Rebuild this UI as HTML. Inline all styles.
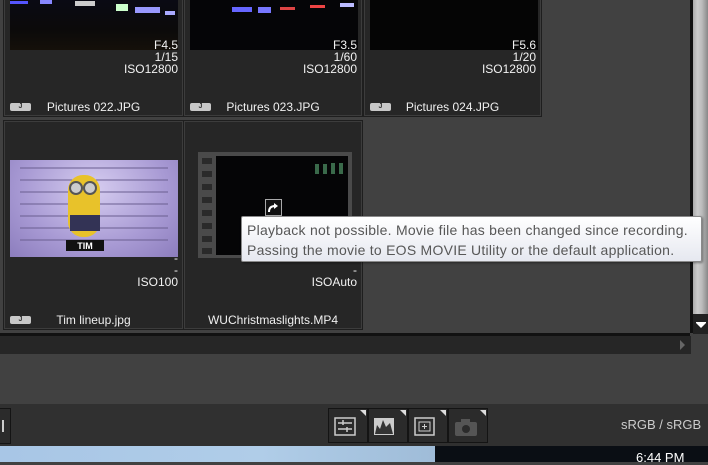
<!DOCTYPE html>
<html><head><meta charset="utf-8"><style>
*{margin:0;padding:0;box-sizing:border-box}
body{width:708px;height:462px;overflow:hidden;background:#414141;position:relative;font-family:"Liberation Sans",sans-serif;color:#f0f0f0}
.abs{position:absolute}
.cell{position:absolute;background:#262626;border:1px solid #3c3c3c;outline:1px solid #1e1e1e}
.meta{position:absolute;right:4px;text-align:right;font-size:12px;line-height:12px;color:#f2f2f2}
.name{position:absolute;font-size:12px;color:#f0f0f0;left:0;right:0;text-align:center}
.j{position:absolute;left:5px;width:21px;height:8px;background:#c8c8c8;border-radius:2px;font-size:7px;line-height:8px;color:#333;text-align:center;font-weight:bold}
.btn{position:absolute;top:408px;width:40px;height:35px;background:#2b2b2b;border:1px solid #141414}
.btn:after{content:"";position:absolute;right:1px;top:1px;border-top:6px solid #ddd;border-left:6px solid transparent}
</style></head><body>
<!-- row1 -->
<div class="cell" style="left:4px;top:-2px;width:179px;height:118px">
 <div class="abs" style="left:5px;top:0;width:168px;height:51px;background:linear-gradient(#0a0a14,#0b0a0a 60%,#15100a)"></div>
 <svg class="abs" style="left:5px;top:0" width="168" height="20"><rect x="0" y="2" width="18" height="3" fill="#55f"/><rect x="30" y="1" width="12" height="4" fill="#88f"/><rect x="65" y="2" width="20" height="5" fill="#ccc"/><rect x="106" y="5" width="12" height="7" fill="#cfc"/><rect x="125" y="8" width="25" height="6" fill="#99f"/><rect x="155" y="12" width="10" height="4" fill="#aaf"/></svg>
 <div class="meta" style="top:40px">F4.5<br>1/15<br>ISO12800</div>
 <div class="j" style="top:104px">J</div><div class="name" style="top:101px">Pictures 022.JPG</div>
</div>
<div class="cell" style="left:184px;top:-2px;width:178px;height:118px">
 <div class="abs" style="left:5px;top:0;width:168px;height:51px;background:#050507"></div>
 <svg class="abs" style="left:5px;top:0" width="168" height="20"><rect x="42" y="8" width="20" height="5" fill="#66f"/><rect x="68" y="8" width="13" height="6" fill="#77f"/><rect x="90" y="8" width="15" height="3" fill="#d44"/><rect x="120" y="6" width="15" height="3" fill="#e44"/><rect x="150" y="4" width="14" height="4" fill="#bbf"/></svg>
 <div class="meta" style="top:40px">F3.5<br>1/60<br>ISO12800</div>
 <div class="j" style="top:104px">J</div><div class="name" style="top:101px">Pictures 023.JPG</div>
</div>
<div class="cell" style="left:364px;top:-2px;width:177px;height:118px">
 <div class="abs" style="left:5px;top:0;width:168px;height:51px;background:#050505"></div>
 <div class="meta" style="top:40px">F5.6<br>1/20<br>ISO12800</div>
 <div class="j" style="top:104px">J</div><div class="name" style="top:101px">Pictures 024.JPG</div>
</div>
<!-- row2 -->
<div class="cell" style="left:4px;top:121px;width:179px;height:208px">
 <div class="abs" style="left:5px;top:38px;width:168px;height:97px;background:radial-gradient(ellipse at 50% 30%,#d6cdf0,#a89ad4 60%,#8c7dbd)"></div>
 <svg class="abs" style="left:5px;top:38px" width="168" height="97"><g stroke="#6a5e90" stroke-width="1"><line x1="10" y1="8" x2="158" y2="8"/><line x1="10" y1="20" x2="158" y2="20"/><line x1="10" y1="32" x2="158" y2="32"/><line x1="10" y1="44" x2="158" y2="44"/><line x1="10" y1="56" x2="158" y2="56"/><line x1="10" y1="68" x2="158" y2="68"/><line x1="10" y1="80" x2="158" y2="80"/></g><rect x="58" y="15" width="32" height="62" rx="15" fill="#e8c22a"/><circle cx="66" cy="28" r="6" fill="#ccc" stroke="#555" stroke-width="2"/><circle cx="80" cy="28" r="6" fill="#ccc" stroke="#555" stroke-width="2"/><rect x="60" y="55" width="30" height="16" fill="#335"/><rect x="56" y="80" width="38" height="11" fill="#111"/><text x="75" y="89" font-size="9" fill="#fff" text-anchor="middle" font-weight="bold" font-family="Liberation Sans">TIM</text></svg>
 <div class="meta" style="top:130px">-<br>-<br>ISO100</div>
 <div class="j" style="top:194px">J</div><div class="name" style="top:191px">Tim lineup.jpg</div>
</div>
<div class="cell" style="left:184px;top:121px;width:178px;height:208px">
 <div class="abs" style="left:13px;top:30px;width:154px;height:106px;background:#4a4a4a"></div>
 <div class="abs" style="left:31px;top:34px;width:132px;height:99px;background:#050506"></div>
 <svg class="abs" style="left:17px;top:34px" width="12" height="99"><g fill="#2a2a2a"><rect x="0" y="2" width="10" height="6"/><rect x="0" y="15" width="10" height="6"/><rect x="0" y="28" width="10" height="6"/><rect x="0" y="41" width="10" height="6"/><rect x="0" y="54" width="10" height="6"/><rect x="0" y="67" width="10" height="6"/><rect x="0" y="80" width="10" height="6"/><rect x="0" y="92" width="10" height="6"/></g></svg>
 <svg class="abs" style="left:130px;top:38px" width="40" height="20"><g fill="#3a6a4a"><rect x="0" y="4" width="4" height="10"/><rect x="8" y="4" width="4" height="10"/><rect x="16" y="3" width="4" height="11"/><rect x="24" y="3" width="4" height="11"/></g></svg>
 <div class="abs" style="left:80px;top:77px;width:17px;height:17px;background:#111;border:1px solid #aaa"></div>
 <svg class="abs" style="left:80px;top:77px" width="17" height="17"><path d="M4 13 Q4 7 10 7" stroke="#fff" stroke-width="2" fill="none"/><path d="M9 4 L13 7 L9 10Z" fill="#fff"/></svg>
 <div class="meta" style="top:130px">-<br>-<br>ISOAuto</div>
 <div class="name" style="top:191px">WUChristmaslights.MP4</div>
</div>
<!-- vertical scrollbar -->
<div class="abs" style="left:690px;top:0;width:3px;height:333px;background:#111"></div>
<div class="abs" style="left:693px;top:0;width:15px;height:314px;background:linear-gradient(90deg,#aaa,#ccc 30%,#bbb 60%,#888)"></div>
<div class="abs" style="left:693px;top:314px;width:15px;height:20px;background:#222"></div>
<div class="abs" style="left:696px;top:323px;border-top:5px solid #fff;border-left:5px solid transparent;border-right:5px solid transparent"></div>
<div class="abs" style="left:696px;top:322px;width:10px;height:1px;background:#fff"></div>
<!-- horizontal strip -->
<div class="abs" style="left:0;top:333px;width:690px;height:3px;background:#111"></div>
<div class="abs" style="left:0;top:336px;width:691px;height:18px;background:#262626"></div>
<div class="abs" style="left:680px;top:340px;border-left:5px solid #666;border-top:5px solid transparent;border-bottom:5px solid transparent"></div>
<!-- toolbar -->
<div class="abs" style="left:0;top:404px;width:708px;height:42px;background:#303030"></div>
<div class="abs" style="left:-2px;top:408px;width:13px;height:36px;background:#2b2b2b;border:1px solid #141414"></div>
<div class="abs" style="left:1px;top:420px;width:3px;height:12px;border-right:2px solid #ccc"></div>
<div class="btn" style="left:328px"><svg width="40" height="35"><rect x="6" y="9" width="20" height="17" fill="none" stroke="#ccc" stroke-width="1.5"/><path d="M9 14H23M9 20H23M14 11V16M18 18V23" stroke="#ccc" stroke-width="1.5"/></svg></div>
<div class="btn" style="left:368px"><svg width="40" height="35"><rect x="5" y="9" width="20" height="17" fill="#ccc"/><path d="M6 25 L8 16 L11 20 L14 11 L17 18 L21 14 L24 25Z" fill="#333"/></svg></div>
<div class="btn" style="left:408px"><svg width="40" height="35"><rect x="6" y="9" width="19" height="17" fill="none" stroke="#ccc" stroke-width="1.5"/><rect x="10" y="13" width="11" height="9" fill="none" stroke="#ccc"/><path d="M15.5 15V20M13 17.5H18" stroke="#ccc"/></svg></div>
<div class="btn" style="left:448px"><svg width="40" height="35"><rect x="6" y="13" width="22" height="14" rx="2" fill="#555"/><rect x="12" y="10" width="9" height="4" fill="#555"/><circle cx="17" cy="20" r="4" fill="#2b2b2b"/></svg></div>
<div class="abs" style="left:621px;top:417px;font-size:13px;color:#ccc;white-space:nowrap">sRGB / sRGB</div>
<!-- taskbar -->
<div class="abs" style="left:0;top:446px;width:708px;height:16px;background:#0a0e14"></div>
<div class="abs" style="left:0;top:446px;width:435px;height:16px;background:linear-gradient(90deg,#a8c6e6,#b0cde8 60%,#9fbcd8)"></div>
<div class="abs" style="left:636px;top:450px;font-size:13px;color:#fff;white-space:nowrap">6:44 PM</div>
<!-- tooltip -->
<div class="abs" style="left:241px;top:216px;width:461px;height:46px;background:linear-gradient(#fff,#e6e8f0);border:1px solid #8a8a8a;border-radius:2px;box-shadow:1px 1px 2px rgba(0,0,0,.4);padding:3px 0 0 5px;font-size:14px;line-height:20px;color:#575757;white-space:nowrap;letter-spacing:0.25px">Playback not possible. Movie file has been changed since recording.<br>Passing the movie to EOS MOVIE Utility or the default application.</div>
</body></html>
